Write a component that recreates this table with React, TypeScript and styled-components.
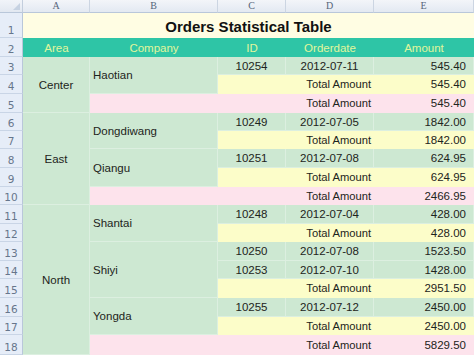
import React from 'react';
import styled, { createGlobalStyle } from 'styled-components';

const Global = createGlobalStyle`
  html, body { margin: 0; padding: 0; background: #ffffff; overflow: hidden; }
  * { box-sizing: border-box; }
`;

const ROW_HEIGHTS = [13, 25, 19, 18, 19, 19, 18, 18, 19, 19, 18, 19, 18, 19, 18, 19, 19, 18, 20];
const COLS = ['A', 'B', 'C', 'D', 'E'];

const Sheet = styled.div`
  display: grid;
  grid-template-columns: 23px 67px 128px 68px 88px 100px;
  grid-template-rows: ${ROW_HEIGHTS.map((h) => `${h}px`).join(' ')};
  width: 474px;
  height: 355px;
  font-family: 'Liberation Sans', Arial, sans-serif;
  font-size: 11.5px;
  color: #1d2420;
`;

const Corner = styled.div`
  position: relative;
  grid-row: 1;
  grid-column: 1;
  background: linear-gradient(#f1f4f9, #e2e8f1);
  border-right: 1px solid #c3cedd;
  border-bottom: 1px solid #b9c7da;
  &::after {
    content: '';
    position: absolute;
    right: 2px;
    bottom: 2px;
    border-style: solid;
    border-width: 0 0 7px 7px;
    border-color: transparent transparent #c6d2e2 transparent;
  }
`;

const ColHead = styled.div<{ $c: number }>`
  grid-row: 1;
  grid-column: ${(p) => p.$c};
  display: flex;
  align-items: flex-end;
  justify-content: center;
  background: linear-gradient(#f3f5f9, #e3e9f2);
  border-right: 1px solid #ccd5e2;
  border-bottom: 1px solid #b9c7da;
  font-family: 'Liberation Serif', 'Times New Roman', serif;
  font-size: 10px;
  line-height: 12px;
  color: #56657a;
`;

const RowHead = styled.div<{ $r: number }>`
  grid-row: ${(p) => p.$r};
  grid-column: 1;
  display: flex;
  align-items: flex-end;
  justify-content: center;
  padding-bottom: 1px;
  background: #e6edf8;
  border-right: 1px solid #b9c7da;
  border-bottom: 1px solid #c9d5e6;
  font-family: 'DejaVu Sans', sans-serif;
  font-size: 10.5px;
  line-height: 12px;
  color: #66768b;
`;

const Title = styled.div`
  grid-row: 2;
  grid-column: 2 / 7;
  display: flex;
  align-items: center;
  justify-content: center;
  padding-top: 1px;
  background: #fffde3;
  font-weight: bold;
  font-size: 15px;
  color: #111;
`;

const HeadCell = styled.div<{ $c: number }>`
  grid-row: 3;
  grid-column: ${(p) => p.$c};
  display: flex;
  align-items: center;
  justify-content: center;
  background: #2ec5a6;
  font-size: 11.5px;
  color: #e1f69c;
`;

const BG = { green: '#cde8d2', yellow: '#fcfdc9', pink: '#fde3ec' } as const;
const LINE = { green: '#dcefe0', yellow: '#fcfdc9', pink: '#fde3ec' } as const;

type Tone = keyof typeof BG;
type Align = 'left' | 'center' | 'right';

const Cell = styled.div<{ $r: string; $c: string; $tone: Tone; $align?: Align; $inset?: number }>`
  grid-row: ${(p) => p.$r};
  grid-column: ${(p) => p.$c};
  display: flex;
  align-items: center;
  justify-content: ${(p) => (p.$align === 'left' ? 'flex-start' : p.$align === 'right' ? 'flex-end' : 'center')};
  padding: 0 ${(p) => p.$inset ?? 3}px 0 3px;
  background: ${(p) => BG[p.$tone]};
  border-right: 1px solid ${(p) => LINE[p.$tone]};
  border-bottom: 1px solid ${(p) => LINE[p.$tone]};
  white-space: nowrap;
`;

const Label = styled.span`
  font-size: 11.2px;
`;

type Order = { id: string; date: string; amount: string };
type Company = { name: string; orders: Order[]; total: string };
type Area = { name: string; companies: Company[]; total: string };

const DATA: Area[] = [
  {
    name: 'Center',
    total: '545.40',
    companies: [{ name: 'Haotian', total: '545.40', orders: [{ id: '10254', date: '2012-07-11', amount: '545.40' }] }],
  },
  {
    name: 'East',
    total: '2466.95',
    companies: [
      { name: 'Dongdiwang', total: '1842.00', orders: [{ id: '10249', date: '2012-07-05', amount: '1842.00' }] },
      { name: 'Qiangu', total: '624.95', orders: [{ id: '10251', date: '2012-07-08', amount: '624.95' }] },
    ],
  },
  {
    name: 'North',
    total: '5829.50',
    companies: [
      { name: 'Shantai', total: '428.00', orders: [{ id: '10248', date: '2012-07-04', amount: '428.00' }] },
      {
        name: 'Shiyi',
        total: '2951.50',
        orders: [
          { id: '10250', date: '2012-07-08', amount: '1523.50' },
          { id: '10253', date: '2012-07-10', amount: '1428.00' },
        ],
      },
      { name: 'Yongda', total: '2450.00', orders: [{ id: '10255', date: '2012-07-12', amount: '2450.00' }] },
    ],
  },
];

function buildBody() {
  const cells: React.ReactNode[] = [];
  let row = 4; // grid row of sheet row 3
  DATA.forEach((area) => {
    const areaStart = row;
    area.companies.forEach((co) => {
      const coStart = row;
      co.orders.forEach((o) => {
        cells.push(
          <Cell key={`id${row}`} $r={`${row}`} $c="4" $tone="green">{o.id}</Cell>,
          <Cell key={`dt${row}`} $r={`${row}`} $c="5" $tone="green">{o.date}</Cell>,
          <Cell key={`am${row}`} $r={`${row}`} $c="6" $tone="green" $align="right" $inset={7}>{o.amount}</Cell>,
        );
        row++;
      });
      cells.push(
        <Cell key={`ye${row}`} $r={`${row}`} $c="4" $tone="yellow" />,
        <Cell key={`yl${row}`} $r={`${row}`} $c="5" $tone="yellow" $align="right" $inset={2}><Label>Total Amount</Label></Cell>,
        <Cell key={`yv${row}`} $r={`${row}`} $c="6" $tone="yellow" $align="right" $inset={7}>{co.total}</Cell>,
      );
      row++;
      cells.push(
        <Cell key={`co${coStart}`} $r={`${coStart} / ${row}`} $c="3" $tone="green" $align="left">{co.name}</Cell>,
      );
    });
    cells.push(
      <Cell key={`pe${row}`} $r={`${row}`} $c="3 / 5" $tone="pink" />,
      <Cell key={`pl${row}`} $r={`${row}`} $c="5" $tone="pink" $align="right" $inset={2}><Label>Total Amount</Label></Cell>,
      <Cell key={`pv${row}`} $r={`${row}`} $c="6" $tone="pink" $align="right" $inset={7}>{area.total}</Cell>,
    );
    row++;
    cells.push(
      <Cell key={`ar${areaStart}`} $r={`${areaStart} / ${row}`} $c="2" $tone="green">{area.name}</Cell>,
    );
  });
  return cells;
}

export default function App() {
  return (
    <>
      <Global />
      <Sheet>
        <Corner />
        {COLS.map((c, i) => (
          <ColHead key={c} $c={i + 2}>{c}</ColHead>
        ))}
        {Array.from({ length: 18 }, (_, i) => (
          <RowHead key={i} $r={i + 2}>{i + 1}</RowHead>
        ))}
        <Title>Orders Statistical Table</Title>
        {['Area', 'Company', 'ID', 'Orderdate', 'Amount'].map((h, i) => (
          <HeadCell key={h} $c={i + 2}>{h}</HeadCell>
        ))}
        {buildBody()}
      </Sheet>
    </>
  );
}
